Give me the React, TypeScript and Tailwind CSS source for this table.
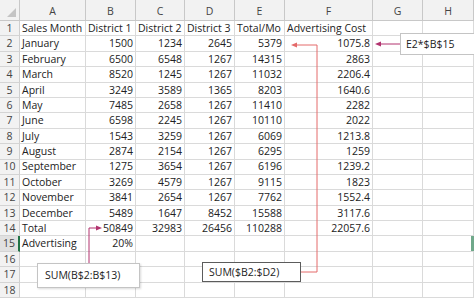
import React from "react";

const colTemplate =
  "grid grid-cols-[20px_66px_50px_49px_50px_50px_88px_50px_51px]";

const letters = ["A", "B", "C", "D", "E", "F", "G", "H"];

const data: string[][] = [
  ["Sales Month", "District 1", "District 2", "District 3", "Total/Mo", "Advertising Cost"],
  ["January", "1500", "1234", "2645", "5379", "1075.8"],
  ["February", "6500", "6548", "1267", "14315", "2863"],
  ["March", "8520", "1245", "1267", "11032", "2206.4"],
  ["April", "3249", "3589", "1365", "8203", "1640.6"],
  ["May", "7485", "2658", "1267", "11410", "2282"],
  ["June", "6598", "2245", "1267", "10110", "2022"],
  ["July", "1543", "3259", "1267", "6069", "1213.8"],
  ["August", "2874", "2154", "1267", "6295", "1259"],
  ["September", "1275", "3654", "1267", "6196", "1239.2"],
  ["October", "3269", "4579", "1267", "9115", "1823"],
  ["November", "3841", "2654", "1267", "7762", "1552.4"],
  ["December", "5489", "1647", "8452", "15588", "3117.6"],
  ["Total", "50849", "32983", "26456", "110288", "22057.6"],
  ["Advertising", "20%"],
  [],
  [],
  [],
];

function Row({ n, cells }: { n: number; cells: string[] }) {
  const selected = n === 15;
  return (
    <div className={colTemplate + " h-[15.4px]"}>
      <div
        className={
          "flex items-center justify-center border-b border-[#d4d4d4] text-[#444] " +
          (selected
            ? "bg-[#e1e1e1] border-r-2 border-r-[#217346]"
            : "bg-[#f2f2f2] border-r border-r-[#cfcfcf]")
        }
      >
        {n}
      </div>
      {letters.map((l, i) => {
        const v = cells[i] ?? "";
        const left = i === 0 || n === 1;
        return (
          <div
            key={l}
            className={
              "flex items-center whitespace-nowrap border-r border-b border-[#dadada] " +
              (left ? "justify-start pl-[2px]" : "justify-end pr-[2px]")
            }
          >
            {v}
          </div>
        );
      })}
    </div>
  );
}

export default function App() {
  return (
    <div
      className="relative w-[474px] h-[299px] overflow-hidden bg-white text-[10.5px] leading-none text-[#222]"
      style={{ fontFamily: '"Open Sans", "Liberation Sans", sans-serif' }}
    >
      {/* column headers */}
      <div className={colTemplate + " h-[21px] bg-[#f2f2f2] text-[#444]"}>
        <div className="relative border-r border-b border-[#c8c8c8]">
          <div className="absolute right-[3px] bottom-[3px] w-0 h-0 border-l-[9px] border-l-transparent border-b-[9px] border-b-[#c4c4c4]" />
        </div>
        {letters.map((l) => (
          <div
            key={l}
            className="flex items-center justify-center pt-[2px] border-r border-b border-[#c8c8c8]"
          >
            {l}
          </div>
        ))}
      </div>

      {data.map((cells, i) => (
        <Row key={i} n={i + 1} cells={cells} />
      ))}

      {/* selection edge, off to the right on row 15 */}
      <div className="absolute left-[471px] top-[236px] w-[3px] h-[15px] bg-[#6fa88a]" />

      {/* arrows */}
      <svg className="absolute inset-0" width="474" height="299" viewBox="0 0 474 299">
        <path d="M89 263 V228 H97" fill="none" stroke="#b2336f" strokeWidth="1" />
        <polygon points="102,228 96,225.5 96,230.5" fill="#b2336f" />
        <path d="M400 44 H380" fill="none" stroke="#b2336f" strokeWidth="1" />
        <polygon points="375,44 381,41.5 381,46.5" fill="#b2336f" />
        <path d="M301 272 H317 V45 H296" fill="none" stroke="#e46a6a" strokeWidth="1" />
        <polygon points="291,45 297,42.5 297,47.5" fill="#e46a6a" />
      </svg>

      {/* formula callouts */}
      <div className="absolute left-[37px] top-[263px] w-[103px] h-[25px] flex items-center pl-[7px] bg-white border border-[#c4c4c4] shadow-[1px_1px_2px_rgba(0,0,0,0.15)]">
        SUM(B$2:B$13)
      </div>
      <div className="absolute left-[202px] top-[262px] w-[99px] h-[20px] flex items-center pl-[6px] bg-white border border-[#5c5c5c]">
        SUM($B2:$D2)
      </div>
      <div className="absolute left-[400px] top-[33px] w-[90px] h-[22px] flex items-center pl-[5px] bg-white border border-[#c4c4c4]">
        E2*$B$15
      </div>
    </div>
  );
}
